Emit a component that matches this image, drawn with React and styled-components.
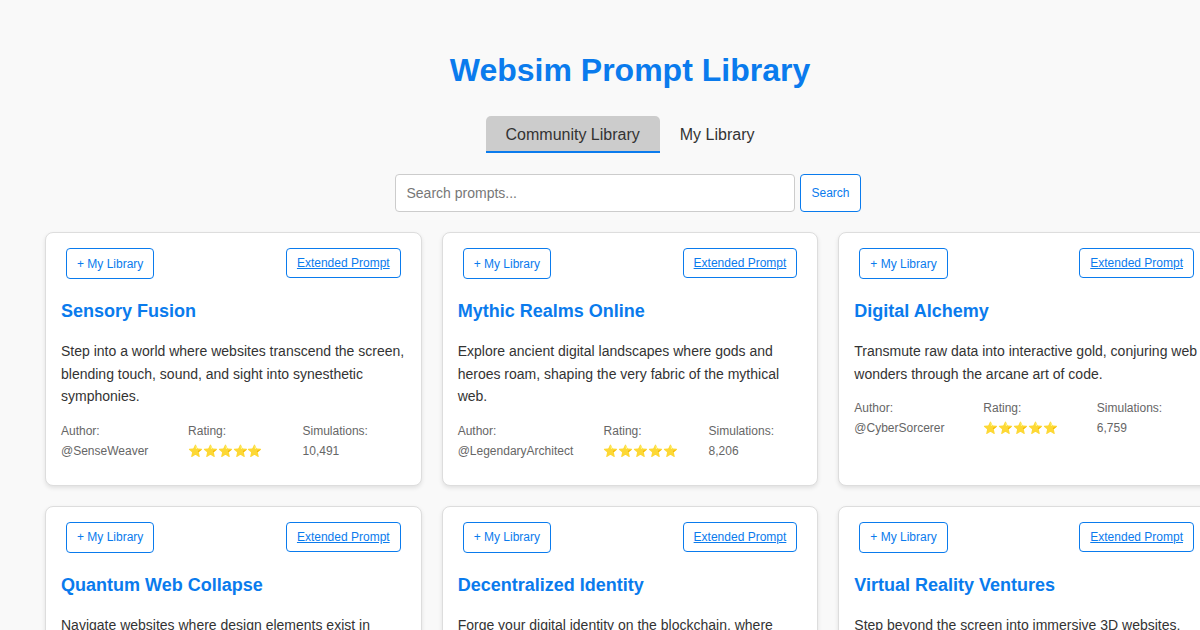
import { useState } from "react";
import styled, { createGlobalStyle } from "styled-components";

const prompts = [
  {
    title: "Sensory Fusion",
    text: "Step into a world where websites transcend the screen, blending touch, sound, and sight into synesthetic symphonies.",
    author: "@SenseWeaver",
    sims: "10,491",
  },
  {
    title: "Mythic Realms Online",
    text: "Explore ancient digital landscapes where gods and heroes roam, shaping the very fabric of the mythical web.",
    author: "@LegendaryArchitect",
    sims: "8,206",
  },
  {
    title: "Digital Alchemy",
    text: "Transmute raw data into interactive gold, conjuring web wonders through the arcane art of code.",
    author: "@CyberSorcerer",
    sims: "6,759",
  },
  {
    title: "Quantum Web Collapse",
    text: "Navigate websites where design elements exist in multiple states until observed by the user.",
    author: "@QuantumDev",
    sims: "5,932",
  },
  {
    title: "Decentralized Identity",
    text: "Forge your digital identity on the blockchain, where every interaction shapes who you become.",
    author: "@ChainCrafter",
    sims: "4,871",
  },
  {
    title: "Virtual Reality Ventures",
    text: "Step beyond the screen into immersive 3D websites, where every page is a world to explore.",
    author: "@VRVoyager",
    sims: "4,310",
  },
];

const Global = createGlobalStyle`
  body {
    margin: 0;
    background: #f9f9f9;
    font-family: "Liberation Sans", Arial, sans-serif;
    color: #333;
    overflow: hidden;
  }
`;

const Page = styled.div`
  width: 1220px;
  padding: 20px;
`;

const Title = styled.h1`
  margin: 31px 0 27px;
  font-size: 32px;
  line-height: 1.2;
  text-align: center;
  color: #0a7bed;
`;

const Tabs = styled.div`
  display: flex;
  justify-content: center;
`;

const Tab = styled.button`
  font-family: inherit;
  font-size: 16px;
  line-height: 18px;
  padding: 10px 20px 7px;
  border: none;
  border-bottom: 2px solid ${(p) => (p.$active ? "#0a7bed" : "transparent")};
  border-radius: 5px 5px 0 0;
  background: ${(p) => (p.$active ? "#cccccc" : "transparent")};
  color: #333;
  cursor: pointer;
`;

const SearchRow = styled.form`
  display: flex;
  justify-content: center;
  gap: 5px;
  margin: 21px 0 20px;
  padding-right: 4px;
`;

const SearchInput = styled.input`
  box-sizing: border-box;
  width: 400px;
  height: 38px;
  padding: 0 10px;
  font-family: inherit;
  font-size: 14px;
  border: 1px solid #ccc;
  border-radius: 4px;
  background: #fff;
  &::placeholder {
    color: #777;
  }
`;

const OutlineButton = styled.button`
  box-sizing: border-box;
  height: ${(p) => p.$h || 31}px;
  padding: 0 10px;
  font-family: inherit;
  font-size: 12px;
  color: #0a7bed;
  background: #fff;
  border: 1px solid #0a7bed;
  border-radius: 4px;
  cursor: pointer;
`;

const Grid = styled.div`
  display: grid;
  grid-template-columns: repeat(3, 1fr);
  gap: 20px;
  padding: 0 25px;
`;

const Card = styled.div`
  background: #fff;
  border: 1px solid #ddd;
  border-radius: 8px;
  box-shadow: 0 2px 4px rgba(0, 0, 0, 0.1);
  padding: 15px;
`;

const CardActions = styled.div`
  display: flex;
  justify-content: space-between;
  align-items: flex-start;
  padding: 0 5px;
`;

const ExtLink = styled.a`
  box-sizing: border-box;
  display: inline-block;
  height: 30px;
  line-height: 28px;
  padding: 0 10px;
  font-size: 12px;
  color: #0a7bed;
  text-decoration: underline;
  border: 1px solid #0a7bed;
  border-radius: 4px;
`;

const CardTitle = styled.h3`
  margin: 20px 0 0;
  font-size: 18px;
  line-height: 24px;
  color: #0a7bed;
`;

const CardText = styled.p`
  margin: 17px 0 0;
  font-size: 14px;
  line-height: 22.4px;
  color: #333;
`;

const Meta = styled.div`
  display: flex;
  gap: 2px;
  margin: 13px 0 9px;
  font-size: 12px;
  line-height: 20px;
  color: #666;
`;

const MetaItem = styled.div`
  flex: 1 1 auto;
`;

const Stars = styled.span`
  font-size: 12px;
  font-family: "Noto Color Emoji", "Liberation Sans", sans-serif;
`;

function PromptCard({ p }) {
  return (
    <Card>
      <CardActions>
        <OutlineButton>+ My Library</OutlineButton>
        <ExtLink href="#">Extended Prompt</ExtLink>
      </CardActions>
      <CardTitle>{p.title}</CardTitle>
      <CardText>{p.text}</CardText>
      <Meta>
        <MetaItem>
          Author:
          <br />
          {p.author}
        </MetaItem>
        <MetaItem>
          Rating:
          <br />
          <Stars>⭐⭐⭐⭐⭐</Stars>
        </MetaItem>
        <MetaItem>
          Simulations:
          <br />
          {p.sims}
        </MetaItem>
      </Meta>
    </Card>
  );
}

export default function App() {
  const [tab, setTab] = useState("community");
  const [query, setQuery] = useState("");

  return (
    <Page>
      <Global />
      <Title>Websim Prompt Library</Title>
      <Tabs>
        <Tab $active={tab === "community"} onClick={() => setTab("community")}>
          Community Library
        </Tab>
        <Tab $active={tab === "mine"} onClick={() => setTab("mine")}>
          My Library
        </Tab>
      </Tabs>
      <SearchRow onSubmit={(e) => e.preventDefault()}>
        <SearchInput
          value={query}
          onChange={(e) => setQuery(e.target.value)}
          placeholder="Search prompts..."
        />
        <OutlineButton $h={38} type="submit">
          Search
        </OutlineButton>
      </SearchRow>
      <Grid>
        {prompts.map((p) => (
          <PromptCard key={p.title} p={p} />
        ))}
      </Grid>
    </Page>
  );
}
